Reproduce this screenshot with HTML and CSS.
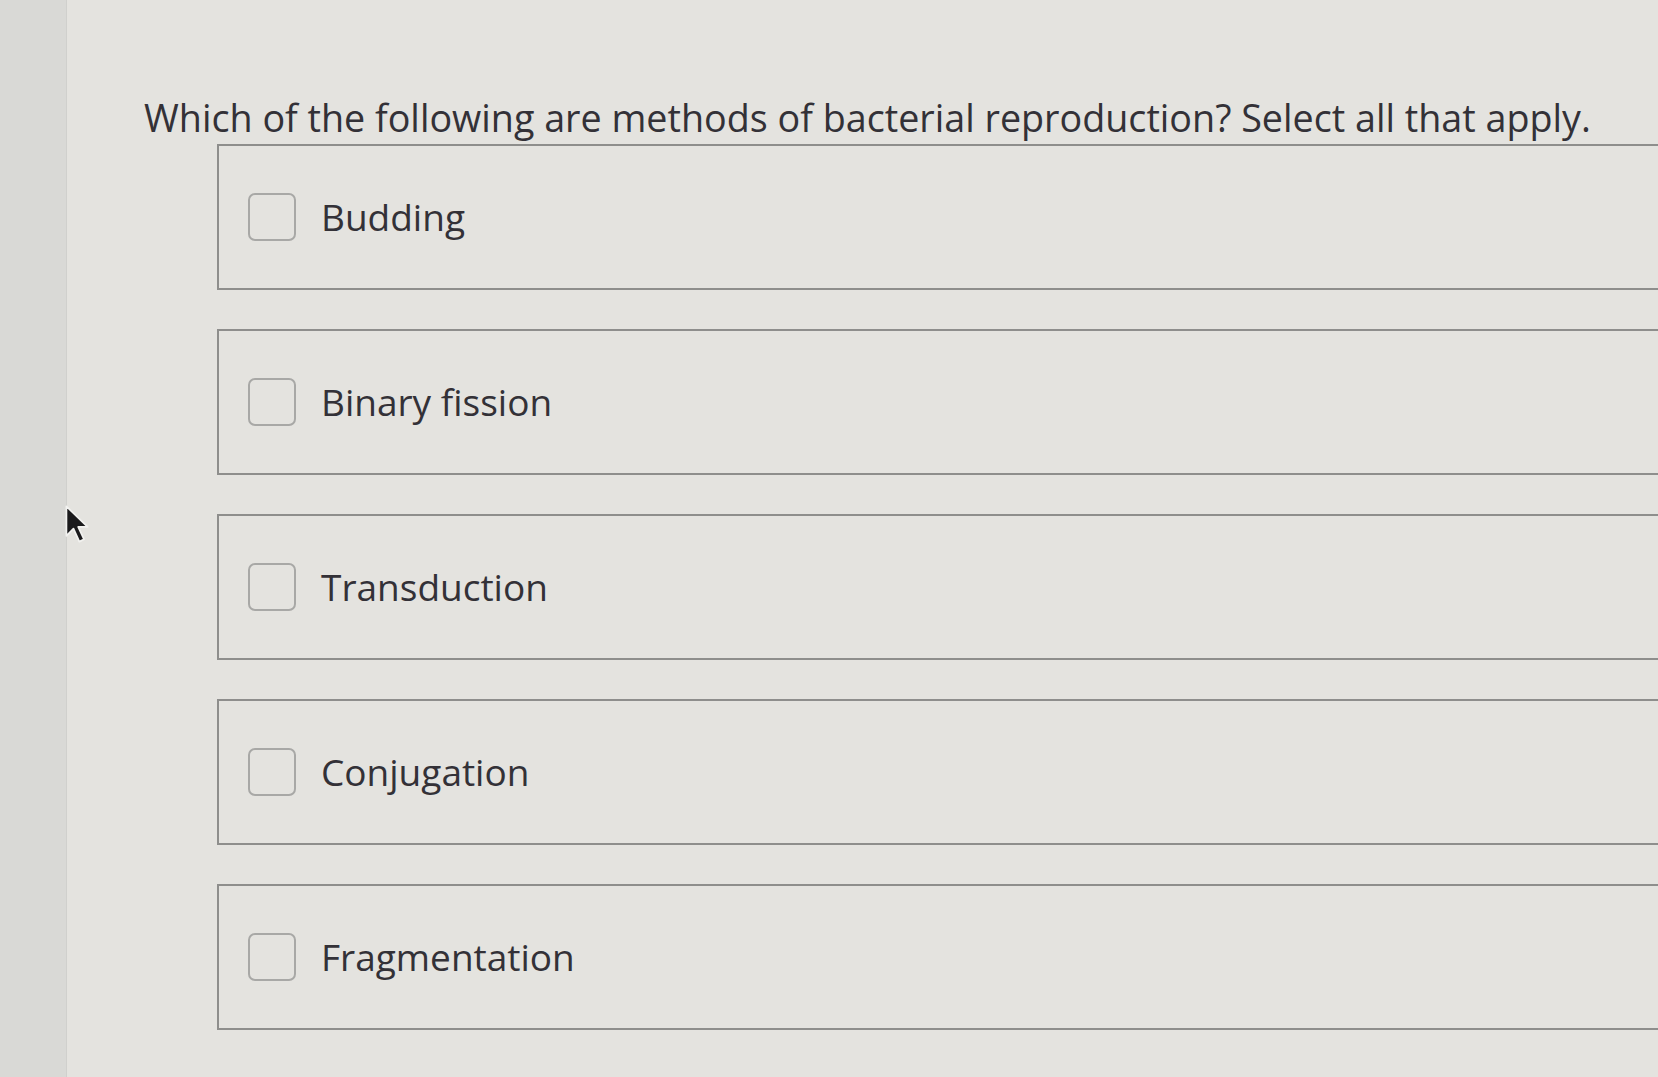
FILE: index.html
```html
<!DOCTYPE html>
<html lang="en">
<head>
<meta charset="utf-8">
<title>Question</title>
<link rel="stylesheet" href="styles.css">
</head>
<body>
<div class="page">
  <aside class="rail"></aside>
  <main class="content">
    <h1 class="question">Which of the following are methods of bacterial reproduction? Select all that apply.</h1>
    <ul class="options">
      <li class="option"><span class="box"></span><span class="label">Budding</span></li>
      <li class="option"><span class="box"></span><span class="label">Binary fission</span></li>
      <li class="option"><span class="box"></span><span class="label">Transduction</span></li>
      <li class="option"><span class="box"></span><span class="label">Conjugation</span></li>
      <li class="option"><span class="box"></span><span class="label">Fragmentation</span></li>
    </ul>
  </main>
  <svg class="cursor" width="26" height="40" viewBox="0 0 22 34">
    <path d="M2 2 L2 27 L8 21 L13 32 L17 30 L12 19.5 L20 19.5 Z" fill="#1a1a1c" stroke="#f2f2f0" stroke-width="1.5" stroke-linejoin="round"/>
  </svg>
</div>
</body>
</html>
```
FILE: styles.css
```css
html, body {
  margin: 0;
  padding: 0;
  width: 100%;
  height: 100%;
  overflow: hidden;
}
body {
  background: #e4e3df;
  font-family: "Open Sans", "Noto Sans", sans-serif;
  color: #38363c;
}
.page {
  position: relative;
  display: flex;
  height: 100%;
}
.rail {
  flex: 0 0 66px;
  background: #d9d9d6;
  border-right: 1px solid #d0d0cd;
}
.content {
  flex: 1;
  padding: 93px 0 0 77px;
  overflow: hidden;
}
.question {
  margin: 0;
  font-size: 37.7px;
  font-weight: 500;
  line-height: 50px;
  color: #333137;
  white-space: nowrap;
}
.options {
  list-style: none;
  margin: 1px 0 0 73px;
  padding: 0;
  display: flex;
  flex-direction: column;
  gap: 39px;
}
.option {
  display: flex;
  align-items: center;
  gap: 25px;
  height: 146px;
  box-sizing: border-box;
  border: 2px solid #8e8e8c;
  border-right: none;
  padding-left: 29px;
}
.box {
  width: 44px;
  height: 44px;
  border: 2px solid #a8a8a6;
  border-radius: 7px;
  flex: 0 0 auto;
}
.label {
  font-size: 37px;
  font-weight: 500;
  line-height: 1;
  color: #333137;
  padding-bottom: 2px;
}
.cursor {
  position: absolute;
  left: 64px;
  top: 504px;
}
```
